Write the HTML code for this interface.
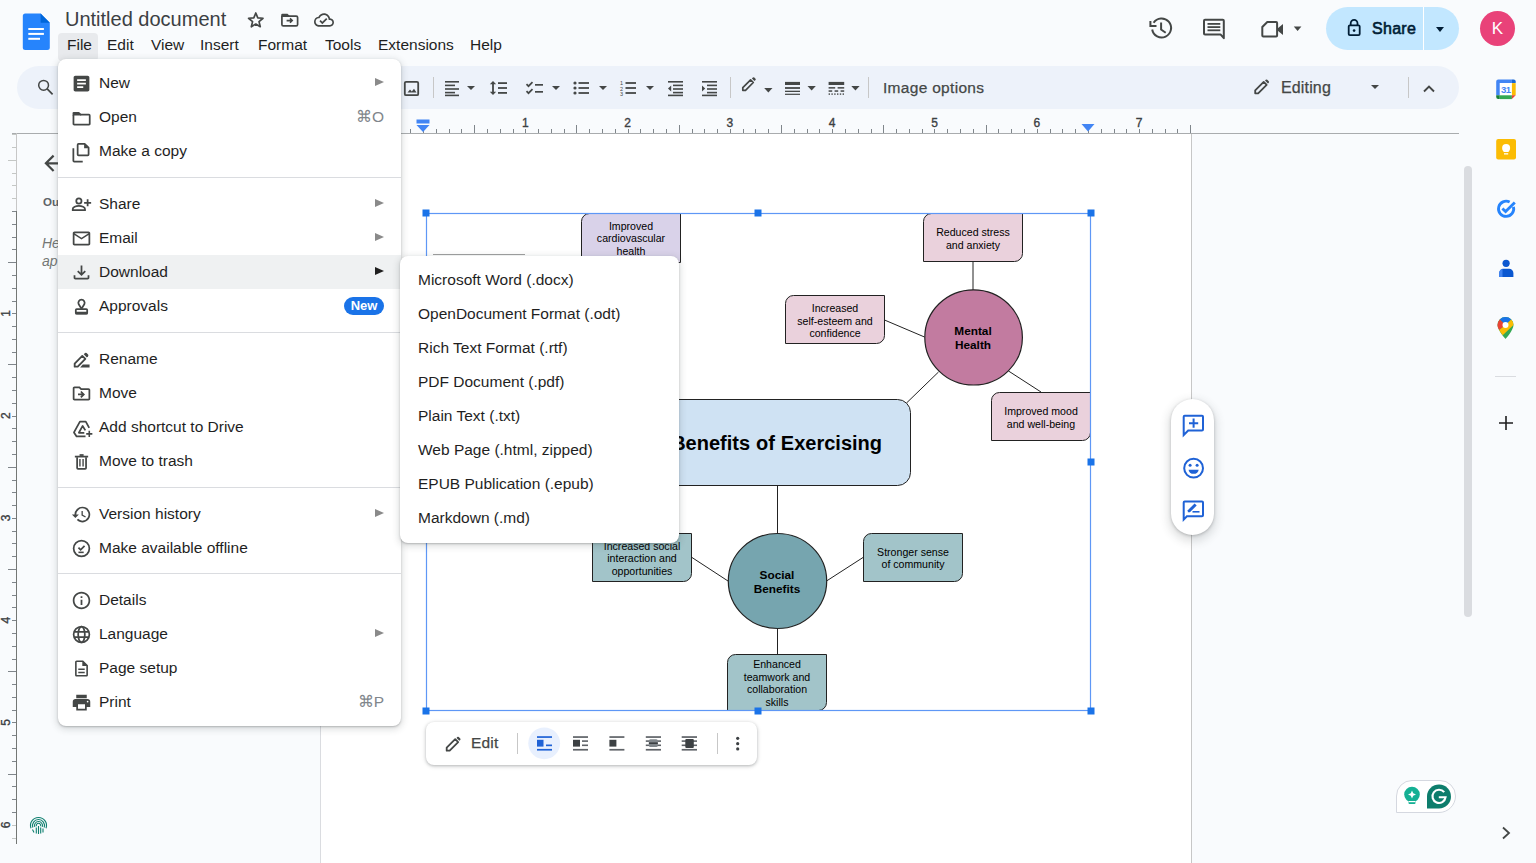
<!DOCTYPE html>
<html><head><meta charset="utf-8">
<style>
*{box-sizing:border-box;margin:0;padding:0}
html,body{width:1536px;height:863px;overflow:hidden;background:#f9fbfd;font-family:"Liberation Sans",sans-serif;color:#1f1f1f;position:relative}
.abs{position:absolute}
svg{position:absolute;overflow:visible}
#title{left:65px;top:8px;font-size:20px;color:#3c4043;white-space:nowrap;line-height:22px}
.mb{position:absolute;top:36px;font-size:15.5px;color:#1f1f1f;white-space:nowrap;line-height:18px}
#toolbar{left:17px;top:66px;width:1442px;height:43px;border-radius:22px;background:#edf2fa}
#page{left:320px;top:134px;width:872px;height:729px;background:#fff;border-left:1px solid #dadce0;border-right:1.5px solid #c7c7c7}
.menu{position:absolute;background:#fff;border-radius:8px;box-shadow:0 2px 6px 2px rgba(60,64,67,.15),0 1px 2px rgba(60,64,67,.3)}
.mi{position:absolute;left:0;right:0;height:34px}
.mi .t{position:absolute;left:41px;top:9px;font-size:15.5px;color:#1f1f1f;white-space:nowrap;line-height:18px}
.mi .k{position:absolute;right:17px;top:9px;font-size:15.5px;color:#80868b;white-space:nowrap;line-height:18px}
.mi .ar{position:absolute;right:17px;top:13px;width:0;height:0;border-left:9px solid #8a8a8a;border-top:4.5px solid transparent;border-bottom:4.5px solid transparent}
.mi svg{left:12.5px;top:7.8px;width:21px;height:21px}
.sep{position:absolute;left:0;right:0;height:1px;background:#dadce0}
.sm .t{left:18px}
.ic{fill:#444746}
.st{fill:none;stroke:#444746}
.dd{position:absolute;width:0;height:0;border-top:5px solid #444746;border-left:5px solid transparent;border-right:5px solid transparent}
.vs{position:absolute;width:1px;background:#c7c7c7}
.dg{font-family:"Liberation Sans",sans-serif;font-size:10.6px;fill:#000;text-anchor:middle}
.dgb{font-family:"Liberation Sans",sans-serif;font-size:11.8px;font-weight:bold;fill:#000;text-anchor:middle}
</style></head><body>

<!-- ===== HEADER ===== -->
<svg style="left:0;top:0" width="60" height="60" viewBox="0 0 60 60">
<path d="M25.3 13.6H40.6L49.8 22.7V47.5a2.5 2.5 0 0 1-2.5 2.5H25.3a2.5 2.5 0 0 1-2.5-2.5V16.1a2.5 2.5 0 0 1 2.5-2.5z" fill="#2684fc"/>
<path d="M40.6 13.6L49.8 22.7H40.6z" fill="#0066da"/>
<rect x="28.3" y="28" width="15.6" height="2" fill="#fff"/>
<rect x="28.3" y="32.9" width="15.6" height="2" fill="#fff"/>
<rect x="28.3" y="37.8" width="11.7" height="2" fill="#fff"/>
</svg>
<div id="title" class="abs">Untitled document</div>
<!-- star -->
<svg style="left:0;top:0" width="400" height="40" viewBox="0 0 400 40">
<path d="M255.80,13.00 L257.80,17.85 L263.03,18.25 L259.03,21.65 L260.27,26.75 L255.80,24.00 L251.33,26.75 L252.57,21.65 L248.57,18.25 L253.80,17.85Z" fill="none" stroke="#444746" stroke-width="1.7" stroke-linejoin="round"/>
<path d="M283.5 16.2H296.2a1.4 1.4 0 0 1 1.4 1.4V24.4a1.4 1.4 0 0 1-1.4 1.4H283.3a1.4 1.4 0 0 1-1.4-1.4V16" fill="none" stroke="#444746" stroke-width="1.7"/>
<path d="M281.2 15a1.2 1.2 0 0 1 1.2-1.2H287.5L289.5 15.8V17H281.2z" fill="#444746"/>
<path d="M286.6 20.6H292.2M290 18.4L292.2 20.6 290 22.8" fill="none" stroke="#444746" stroke-width="1.6"/>
</svg>
<!-- cloud done -->
<svg style="left:314px;top:10px" width="20" height="20" viewBox="0 0 24 24"><path class="ic" d="M19.35 10.04C18.670 6.59 15.64 4 12 4 9.11 4 6.6 5.64 5.35 8.04 2.34 8.36 0 10.91 0 14c0 3.31 2.69 6 6 6h13c2.76 0 5-2.24 5-5 0-2.64-2.05-4.78-4.65-4.96zM19 18H6c-2.21 0-4-1.79-4-4 0-2.05 1.53-3.76 3.56-3.97l1.070-.11.5-.95C8.08 7.140 9.94 6 12 6c2.62 0 4.88 1.86 5.39 4.43l.3 1.5 1.53.11c1.56.1 2.78 1.41 2.78 2.96 0 1.65-1.35 3-3 3zm-9-3.82l-2.09-2.09L6.5 13.5 10 17l6.01-6.01-1.41-1.41z"/></svg>

<div class="abs" style="left:58px;top:33px;width:40px;height:28px;border-radius:4px;background:#e8eaed"></div>
<div class="mb" style="left:67px">File</div>
<div class="mb" style="left:107px">Edit</div>
<div class="mb" style="left:151px">View</div>
<div class="mb" style="left:200px">Insert</div>
<div class="mb" style="left:258px">Format</div>
<div class="mb" style="left:325px">Tools</div>
<div class="mb" style="left:378px">Extensions</div>
<div class="mb" style="left:470px">Help</div>

<!-- right header icons -->
<svg style="left:0;top:0" width="1536" height="60" viewBox="0 0 1536 60">
<g fill="none" stroke="#444746" stroke-width="2">
<path d="M1152.2 29.5A9.5 9.5 0 1 0 1153.6 22.8"/>
<path d="M1161.1 22.5V29.6l4.6 3.2"/>
<path d="M1150.4 21V26H1156.5"/>
<path d="M1205 19.7H1222.8a1 1 0 0 1 1 1V38.2L1220.5 34.4H1205a1 1 0 0 1-1-1V20.7a1 1 0 0 1 1-1z" stroke-linejoin="round"/>
<path d="M1262.3 27V35.6a1 1 0 0 0 1 1H1276.1a1 1 0 0 0 1-1V23a1 1 0 0 0-1-1H1267.3z" stroke-linejoin="round"/>
</g>
<g fill="#444746">
<rect x="1207.5" y="23" width="12.8" height="1.8"/><rect x="1207.5" y="26.2" width="12.8" height="1.8"/><rect x="1207.5" y="29.4" width="12.8" height="1.8"/>
<path d="M1277.5 28.5L1283 24V35L1277.5 30.5z"/>
<path d="M1293.8 26.5H1301.4L1297.6 30.9z"/>
</g>
</svg>
<div class="abs" style="left:1326px;top:7px;width:133px;height:43px;border-radius:22px;background:#c2e7ff"></div>
<div class="abs" style="left:1423px;top:7px;width:1px;height:43px;background:#fff"></div>
<svg style="left:0;top:0" width="1536" height="60" viewBox="0 0 1536 60"><path d="M1350.7 25V23.2a3.4 3.4 0 0 1 6.8 0V25" fill="none" stroke="#001d35" stroke-width="1.8"/><rect x="1348.7" y="25.4" width="11" height="9.8" rx="1.2" fill="none" stroke="#001d35" stroke-width="1.8"/><circle cx="1354.1" cy="30.6" r="1.3" fill="#001d35"/></svg>
<div class="abs" style="left:1372px;top:20px;font-size:16px;color:#001d35;line-height:18px;-webkit-text-stroke:0.6px #001d35;letter-spacing:0.3px">Share</div>
<i class="dd" style="left:1436px;top:27px;border-top-color:#001d35;border-width:5px 4.5px 0 4.5px"></i>
<div class="abs" style="left:1480px;top:11px;width:35px;height:35px;border-radius:50%;background:#e94279"></div>
<div class="abs" style="left:1480px;top:19px;width:35px;text-align:center;font-size:17px;color:#fff;line-height:20px">K</div>

<!-- ===== TOOLBAR ===== -->
<div id="toolbar" class="abs"></div>
<svg style="left:0;top:0" width="100" height="120" viewBox="0 0 100 120"><circle cx="43.6" cy="85.3" r="4.9" fill="none" stroke="#444746" stroke-width="1.5"/><path d="M47.2 88.9L52.6 94.3" stroke="#444746" stroke-width="1.7"/></svg>

<!-- image icon -->
<svg style="left:402px;top:77px" width="19" height="21" viewBox="0 0 19 21"><rect x="2.8" y="4.8" width="13.4" height="13.4" rx="1.3" fill="none" stroke="#444746" stroke-width="1.8"/><path d="M5.5 15.5l2.5-3 1.8 2 2.2-2.8 2.5 3.8z" fill="#444746"/></svg>
<div class="vs" style="left:433px;top:77px;height:21px"></div>
<!-- align left -->
<svg style="left:444px;top:80px" width="16" height="17" viewBox="0 0 16 17"><g fill="#444746"><rect x="1" y="1" width="14" height="1.6"/><rect x="1" y="4.6" width="10" height="1.6"/><rect x="1" y="8.2" width="14" height="1.6"/><rect x="1" y="11.8" width="10" height="1.6"/><rect x="1" y="14.6" width="14" height="1.6"/></g></svg>
<i class="dd" style="left:467px;top:86px;border-width:4.5px 4.5px 0 4.5px"></i>
<!-- line spacing -->
<svg style="left:489px;top:80px" width="19" height="16" viewBox="0 0 19 16"><g fill="#444746"><path d="M4 1l3.2 3.2H4.9v7.6h2.3L4 15 .8 11.8h2.3V4.2H.8z"/><rect x="9" y="2.2" width="9" height="1.8"/><rect x="9" y="7.1" width="9" height="1.8"/><rect x="9" y="12" width="9" height="1.8"/></g></svg>
<!-- checklist -->
<svg style="left:525px;top:81px" width="19" height="14" viewBox="0 0 19 14"><g fill="none" stroke="#444746" stroke-width="1.7"><path d="M1.5 3.2l2 2L7.5 1.2"/><path d="M1.5 10.2l2 2 4-4"/></g><g fill="#444746"><rect x="10" y="3" width="8" height="1.7"/><rect x="10" y="10" width="8" height="1.7"/></g></svg>
<i class="dd" style="left:552px;top:86px;border-width:4.5px 4.5px 0 4.5px"></i>
<!-- bullets -->
<svg style="left:573px;top:81px" width="17" height="14" viewBox="0 0 17 14"><g fill="#444746"><circle cx="2" cy="2" r="1.6"/><circle cx="2" cy="7" r="1.6"/><circle cx="2" cy="12" r="1.6"/><rect x="5.5" y="1.1" width="10.5" height="1.8"/><rect x="5.5" y="6.1" width="10.5" height="1.8"/><rect x="5.5" y="11.1" width="10.5" height="1.8"/></g></svg>
<i class="dd" style="left:599px;top:86px;border-width:4.5px 4.5px 0 4.5px"></i>
<!-- numbered -->
<svg style="left:620px;top:80px" width="17" height="17" viewBox="0 0 17 17"><g fill="#444746"><text x="0" y="5" font-size="5.5" font-family="Liberation Sans">1</text><text x="0" y="10.5" font-size="5.5" font-family="Liberation Sans">2</text><text x="0" y="16" font-size="5.5" font-family="Liberation Sans">3</text><rect x="5.5" y="2.1" width="10.5" height="1.8"/><rect x="5.5" y="7.1" width="10.5" height="1.8"/><rect x="5.5" y="12.1" width="10.5" height="1.8"/></g></svg>
<i class="dd" style="left:646px;top:86px;border-width:4.5px 4.5px 0 4.5px"></i>
<!-- indent decrease -->
<svg style="left:667px;top:80px" width="17" height="17" viewBox="0 0 17 17"><g fill="#444746"><rect x="1" y="1" width="15" height="1.6"/><rect x="6" y="4.6" width="10" height="1.6"/><rect x="6" y="8.2" width="10" height="1.6"/><rect x="6" y="11.8" width="10" height="1.6"/><rect x="1" y="14.6" width="15" height="1.6"/><path d="M4.2 5.5v6l-3.2-3z"/></g></svg>
<!-- indent increase -->
<svg style="left:701px;top:80px" width="17" height="17" viewBox="0 0 17 17"><g fill="#444746"><rect x="1" y="1" width="15" height="1.6"/><rect x="6" y="4.6" width="10" height="1.6"/><rect x="6" y="8.2" width="10" height="1.6"/><rect x="6" y="11.8" width="10" height="1.6"/><rect x="1" y="14.6" width="15" height="1.6"/><path d="M1 5.5v6l3.2-3z"/></g></svg>
<div class="vs" style="left:730px;top:77px;height:21px"></div>
<!-- border color pencil -->
<svg style="left:0;top:0" width="1536" height="110" viewBox="0 0 1536 110">
<path d="M742.8 90.3V87.6L750.6 79.8 753.3 82.5 745.5 90.3Z" fill="none" stroke="#444746" stroke-width="1.7" stroke-linejoin="round"/>
<path d="M751.9 78.5L752.9 77.5a1 1 0 0 1 1.4 0l1.2 1.2a1 1 0 0 1 0 1.4L754.5 81.1Z" fill="#444746"/>
<path d="M764.2 88H772.5L768.35 92.6Z" fill="#444746"/>
<g fill="#444746">
<rect x="785" y="81.9" width="15" height="3.1"/><rect x="785" y="87.1" width="15" height="1.8"/><rect x="785" y="90.7" width="15" height="1.3"/><rect x="785" y="93.7" width="15" height="1.2"/>
<path d="M807.5 86H815.8L811.65 90.4Z"/>
<rect x="828.6" y="81.9" width="15.6" height="3.1"/>
<rect x="828.6" y="87.1" width="6.6" height="1.5"/><rect x="837.6" y="87.1" width="6.6" height="1.5"/>
<rect x="828.6" y="90.3" width="3.6" height="1.5"/><rect x="834.6" y="90.3" width="3.6" height="1.5"/><rect x="840.6" y="90.3" width="3.6" height="1.5"/>
<rect x="828.6" y="93.4" width="1.4" height="1.4"/><rect x="831.4" y="93.4" width="1.4" height="1.4"/><rect x="834.2" y="93.4" width="1.4" height="1.4"/><rect x="837" y="93.4" width="1.4" height="1.4"/><rect x="839.8" y="93.4" width="1.4" height="1.4"/><rect x="842.6" y="93.4" width="1.4" height="1.4"/>
<path d="M851.3 86H859.6L855.45 90.4Z"/>
</g>
</svg>
<div class="vs" style="left:868px;top:77px;height:21px"></div>
<div class="abs" style="left:883px;top:79px;font-size:15.5px;color:#444746;line-height:18px;white-space:nowrap;letter-spacing:0.3px;-webkit-text-stroke:0.25px #444746">Image options</div>

<!-- editing -->
<svg style="left:0;top:0" width="1536" height="863" viewBox="0 0 1536 863"><path d="M1255.19 93.36V90.39L1263.70 81.88L1266.67 84.85L1258.16 93.36Z" fill="none" stroke="#444746" stroke-width="1.8" stroke-linejoin="round"/><path d="M1264.99 80.59L1265.78 79.80a1.09 1.09 0 0 1 1.48 0L1268.75 81.28a1.09 1.09 0 0 1 0 1.48L1267.96 83.56Z" fill="#444746"/></svg>
<div class="abs" style="left:1281px;top:79px;font-size:16px;color:#444746;line-height:18px;letter-spacing:0.15px;-webkit-text-stroke:0.25px #444746">Editing</div>
<i class="dd" style="left:1371px;top:85px;border-width:4.5px 4.5px 0 4.5px"></i>
<div class="vs" style="left:1408px;top:77px;height:21px"></div>
<svg style="left:1421px;top:81px" width="16" height="14" viewBox="0 0 16 14"><path d="M3 10.5l5-5 5 5" fill="none" stroke="#444746" stroke-width="1.9"/></svg>

<!-- ===== PAGE ===== -->
<div id="page" class="abs"></div>
<div class="abs" style="left:12px;top:133px;width:1447px;height:1px;background:#a9acae"></div>
<svg style="left:0;top:0" width="1536" height="140"><g stroke="#80868b" stroke-width="1"><line x1="410.5" y1="129" x2="410.5" y2="133"/><line x1="423.5" y1="129" x2="423.5" y2="133"/><line x1="436.5" y1="129" x2="436.5" y2="133"/><line x1="449.5" y1="129" x2="449.5" y2="133"/><line x1="461.5" y1="129" x2="461.5" y2="133"/><line x1="474.5" y1="125" x2="474.5" y2="133"/><line x1="487.5" y1="129" x2="487.5" y2="133"/><line x1="500.5" y1="129" x2="500.5" y2="133"/><line x1="513.5" y1="129" x2="513.5" y2="133"/><line x1="525.5" y1="129" x2="525.5" y2="133"/><line x1="538.5" y1="129" x2="538.5" y2="133"/><line x1="551.5" y1="129" x2="551.5" y2="133"/><line x1="564.5" y1="129" x2="564.5" y2="133"/><line x1="576.5" y1="125" x2="576.5" y2="133"/><line x1="589.5" y1="129" x2="589.5" y2="133"/><line x1="602.5" y1="129" x2="602.5" y2="133"/><line x1="615.5" y1="129" x2="615.5" y2="133"/><line x1="628.5" y1="129" x2="628.5" y2="133"/><line x1="640.5" y1="129" x2="640.5" y2="133"/><line x1="653.5" y1="129" x2="653.5" y2="133"/><line x1="666.5" y1="129" x2="666.5" y2="133"/><line x1="679.5" y1="125" x2="679.5" y2="133"/><line x1="692.5" y1="129" x2="692.5" y2="133"/><line x1="704.5" y1="129" x2="704.5" y2="133"/><line x1="717.5" y1="129" x2="717.5" y2="133"/><line x1="730.5" y1="129" x2="730.5" y2="133"/><line x1="743.5" y1="129" x2="743.5" y2="133"/><line x1="755.5" y1="129" x2="755.5" y2="133"/><line x1="768.5" y1="129" x2="768.5" y2="133"/><line x1="781.5" y1="125" x2="781.5" y2="133"/><line x1="794.5" y1="129" x2="794.5" y2="133"/><line x1="807.5" y1="129" x2="807.5" y2="133"/><line x1="819.5" y1="129" x2="819.5" y2="133"/><line x1="832.5" y1="129" x2="832.5" y2="133"/><line x1="845.5" y1="129" x2="845.5" y2="133"/><line x1="858.5" y1="129" x2="858.5" y2="133"/><line x1="871.5" y1="129" x2="871.5" y2="133"/><line x1="883.5" y1="125" x2="883.5" y2="133"/><line x1="896.5" y1="129" x2="896.5" y2="133"/><line x1="909.5" y1="129" x2="909.5" y2="133"/><line x1="922.5" y1="129" x2="922.5" y2="133"/><line x1="934.5" y1="129" x2="934.5" y2="133"/><line x1="947.5" y1="129" x2="947.5" y2="133"/><line x1="960.5" y1="129" x2="960.5" y2="133"/><line x1="973.5" y1="129" x2="973.5" y2="133"/><line x1="986.5" y1="125" x2="986.5" y2="133"/><line x1="998.5" y1="129" x2="998.5" y2="133"/><line x1="1011.5" y1="129" x2="1011.5" y2="133"/><line x1="1024.5" y1="129" x2="1024.5" y2="133"/><line x1="1037.5" y1="129" x2="1037.5" y2="133"/><line x1="1050.5" y1="129" x2="1050.5" y2="133"/><line x1="1062.5" y1="129" x2="1062.5" y2="133"/><line x1="1075.5" y1="129" x2="1075.5" y2="133"/><line x1="1088.5" y1="125" x2="1088.5" y2="133"/><line x1="1101.5" y1="129" x2="1101.5" y2="133"/><line x1="1114.5" y1="129" x2="1114.5" y2="133"/><line x1="1126.5" y1="129" x2="1126.5" y2="133"/><line x1="1139.5" y1="129" x2="1139.5" y2="133"/><line x1="1152.5" y1="129" x2="1152.5" y2="133"/><line x1="1165.5" y1="129" x2="1165.5" y2="133"/><line x1="1177.5" y1="129" x2="1177.5" y2="133"/><line x1="1190.5" y1="125" x2="1190.5" y2="133"/></g><g font-family="Liberation Sans" font-size="12" fill="#3c4043" stroke="#3c4043" stroke-width="0.35"><text x="525.3" y="127" text-anchor="middle">1</text><text x="627.6" y="127" text-anchor="middle">2</text><text x="729.9" y="127" text-anchor="middle">3</text><text x="832.2" y="127" text-anchor="middle">4</text><text x="934.5" y="127" text-anchor="middle">5</text><text x="1036.8" y="127" text-anchor="middle">6</text><text x="1139.1" y="127" text-anchor="middle">7</text></g></svg>
<div class="abs" style="left:16px;top:133px;width:1px;height:78px;background:#c7c7c7"></div>
<div class="abs" style="left:16px;top:211px;width:1px;height:633px;background:#747775"></div>
<svg style="left:0;top:0" width="60" height="863"><g stroke="#80868b" stroke-width="1"><line x1="12" y1="134.5" x2="16" y2="134.5" stroke="#c4c7c5"/><line x1="12" y1="147.5" x2="16" y2="147.5" stroke="#c4c7c5"/><line x1="8" y1="160.5" x2="16" y2="160.5" stroke="#c4c7c5"/><line x1="12" y1="173.5" x2="16" y2="173.5" stroke="#c4c7c5"/><line x1="12" y1="185.5" x2="16" y2="185.5" stroke="#c4c7c5"/><line x1="12" y1="198.5" x2="16" y2="198.5" stroke="#c4c7c5"/><line x1="12" y1="211.5" x2="16" y2="211.5"/><line x1="12" y1="224.5" x2="16" y2="224.5"/><line x1="12" y1="237.5" x2="16" y2="237.5"/><line x1="12" y1="249.5" x2="16" y2="249.5"/><line x1="8" y1="262.5" x2="16" y2="262.5"/><line x1="12" y1="275.5" x2="16" y2="275.5"/><line x1="12" y1="288.5" x2="16" y2="288.5"/><line x1="12" y1="301.5" x2="16" y2="301.5"/><line x1="12" y1="313.5" x2="16" y2="313.5"/><line x1="12" y1="326.5" x2="16" y2="326.5"/><line x1="12" y1="339.5" x2="16" y2="339.5"/><line x1="12" y1="352.5" x2="16" y2="352.5"/><line x1="8" y1="364.5" x2="16" y2="364.5"/><line x1="12" y1="377.5" x2="16" y2="377.5"/><line x1="12" y1="390.5" x2="16" y2="390.5"/><line x1="12" y1="403.5" x2="16" y2="403.5"/><line x1="12" y1="416.5" x2="16" y2="416.5"/><line x1="12" y1="428.5" x2="16" y2="428.5"/><line x1="12" y1="441.5" x2="16" y2="441.5"/><line x1="12" y1="454.5" x2="16" y2="454.5"/><line x1="8" y1="467.5" x2="16" y2="467.5"/><line x1="12" y1="480.5" x2="16" y2="480.5"/><line x1="12" y1="492.5" x2="16" y2="492.5"/><line x1="12" y1="505.5" x2="16" y2="505.5"/><line x1="12" y1="518.5" x2="16" y2="518.5"/><line x1="12" y1="531.5" x2="16" y2="531.5"/><line x1="12" y1="543.5" x2="16" y2="543.5"/><line x1="12" y1="556.5" x2="16" y2="556.5"/><line x1="8" y1="569.5" x2="16" y2="569.5"/><line x1="12" y1="582.5" x2="16" y2="582.5"/><line x1="12" y1="595.5" x2="16" y2="595.5"/><line x1="12" y1="607.5" x2="16" y2="607.5"/><line x1="12" y1="620.5" x2="16" y2="620.5"/><line x1="12" y1="633.5" x2="16" y2="633.5"/><line x1="12" y1="646.5" x2="16" y2="646.5"/><line x1="12" y1="659.5" x2="16" y2="659.5"/><line x1="8" y1="671.5" x2="16" y2="671.5"/><line x1="12" y1="684.5" x2="16" y2="684.5"/><line x1="12" y1="697.5" x2="16" y2="697.5"/><line x1="12" y1="710.5" x2="16" y2="710.5"/><line x1="12" y1="722.5" x2="16" y2="722.5"/><line x1="12" y1="735.5" x2="16" y2="735.5"/><line x1="12" y1="748.5" x2="16" y2="748.5"/><line x1="12" y1="761.5" x2="16" y2="761.5"/><line x1="8" y1="774.5" x2="16" y2="774.5"/><line x1="12" y1="786.5" x2="16" y2="786.5"/><line x1="12" y1="799.5" x2="16" y2="799.5"/><line x1="12" y1="812.5" x2="16" y2="812.5"/><line x1="12" y1="825.5" x2="16" y2="825.5" stroke="#c4c7c5"/><line x1="12" y1="838.5" x2="16" y2="838.5" stroke="#c4c7c5"/></g><g font-family="Liberation Sans" font-size="12" fill="#3c4043" stroke="#3c4043" stroke-width="0.35"><text transform="translate(10,313.3) rotate(-90)" x="0" y="0" text-anchor="middle">1</text><text transform="translate(10,415.6) rotate(-90)" x="0" y="0" text-anchor="middle">2</text><text transform="translate(10,517.9) rotate(-90)" x="0" y="0" text-anchor="middle">3</text><text transform="translate(10,620.2) rotate(-90)" x="0" y="0" text-anchor="middle">4</text><text transform="translate(10,722.5) rotate(-90)" x="0" y="0" text-anchor="middle">5</text><text transform="translate(10,824.8) rotate(-90)" x="0" y="0" text-anchor="middle">6</text></g></svg>
<!-- indent markers -->
<svg style="left:415px;top:119px" width="16" height="16" viewBox="0 0 16 16"><rect x="1.5" y="0.5" width="13" height="4" fill="#4285f4"/><path d="M1.5 6h13L8 13z" fill="#4285f4"/></svg>
<svg style="left:1080px;top:119px" width="16" height="16" viewBox="0 0 16 16"><path d="M1.5 5h13L8 12.5z" fill="#4285f4"/></svg>

<!--DIAGRAM-->
<svg style="left:0;top:0" width="1536" height="863" viewBox="0 0 1536 863">
<g stroke="#222" stroke-width="1" fill="none">
<line x1="973" y1="262" x2="973" y2="290"/>
<line x1="884.5" y1="320" x2="924.5" y2="337"/>
<line x1="938.5" y1="372" x2="906.5" y2="403"/>
<line x1="1008.5" y1="371" x2="1041" y2="392"/>
<line x1="777.5" y1="485" x2="777.5" y2="533"/>
<line x1="692" y1="557.5" x2="728" y2="581"/>
<line x1="826.5" y1="581" x2="863" y2="557.5"/>
<line x1="777.5" y1="629" x2="777.5" y2="654"/>
</g>
<g stroke="#222" stroke-width="1">
<path d="M433 254.5H525" stroke="#a0a0a0"/>
<path d="M589.5 213.5H680.5V262.5H581.5V221.5A8 8 0 0 1 589.5 213.5Z" fill="#d9d2e9"/>
<path d="M931.5 213.5H1022.5V253.5A8 8 0 0 1 1014.5 261.5H923.5V221.5A8 8 0 0 1 931.5 213.5Z" fill="#ead1dc"/>
<path d="M793.5 295.5H884.5V335.5A8 8 0 0 1 876.5 343.5H785.5V303.5A8 8 0 0 1 793.5 295.5Z" fill="#ead1dc"/>
<path d="M999.5 392.5H1090.5V432.5A8 8 0 0 1 1082.5 440.5H991.5V400.5A8 8 0 0 1 999.5 392.5Z" fill="#ead1dc"/>
<ellipse cx="973.6" cy="337.4" rx="48.8" ry="47.6" fill="#c27ba0" stroke-width="1.2"/>
<rect x="560.5" y="399.5" width="350" height="86" rx="13" fill="#cfe2f3"/>
<path d="M592.5 533.5H691.5V573.5A8 8 0 0 1 683.5 581.5H592.5Z" fill="#a2c4c9"/>
<path d="M871.5 533.5H962.5V573.5A8 8 0 0 1 954.5 581.5H863.5V541.5A8 8 0 0 1 871.5 533.5Z" fill="#a2c4c9"/>
<ellipse cx="777.5" cy="581" rx="49.2" ry="47.5" fill="#76a5af" stroke-width="1.2"/>
<path d="M735.5 654.5H826.5V702.5A8 8 0 0 1 818.5 710.5H727.5V662.5A8 8 0 0 1 735.5 654.5Z" fill="#a2c4c9"/>
</g>
<g class="dg">
<text x="631" y="229.5">Improved</text><text x="631" y="242">cardiovascular</text><text x="631" y="254.5">health</text>
<text x="973" y="236">Reduced stress</text><text x="973" y="248.5">and anxiety</text>
<text x="835" y="312">Increased</text><text x="835" y="324.5">self-esteem and</text><text x="835" y="337">confidence</text>
<text x="1041" y="415">Improved mood</text><text x="1041" y="427.5">and well-being</text>
<text x="642" y="549.5">Increased social</text><text x="642" y="562">interaction and</text><text x="642" y="574.5">opportunities</text>
<text x="913" y="555.5">Stronger sense</text><text x="913" y="568">of community</text>
<text x="777" y="668">Enhanced</text><text x="777" y="680.5">teamwork and</text><text x="777" y="693">collaboration</text><text x="777" y="705.5">skills</text>
</g>
<g class="dgb">
<text x="973" y="335">Mental</text><text x="973" y="349">Health</text>
<text x="777" y="579">Social</text><text x="777" y="593">Benefits</text>
</g>
<text x="882" y="450" text-anchor="end" font-family="Liberation Sans" font-weight="bold" font-size="20" word-spacing="0.4" fill="#000">Benefits of Exercising</text>
<!-- selection frame -->
<rect x="426.5" y="213.5" width="664" height="497" fill="none" stroke="#5e97f6" stroke-width="1.2"/>
<g fill="#1a73e8">
<rect x="422.5" y="209.5" width="7" height="7"/><rect x="754.5" y="209.5" width="7" height="7"/><rect x="1087.5" y="209.5" width="7" height="7"/>
<rect x="1087.5" y="458.5" width="7" height="7"/>
<rect x="422.5" y="707.5" width="7" height="7"/><rect x="754.5" y="707.5" width="7" height="7"/><rect x="1087.5" y="707.5" width="7" height="7"/>
</g>
</svg>
<!-- floating image toolbar -->
<div class="abs" style="left:426px;top:722px;width:331px;height:43px;border-radius:8px;background:#fff;box-shadow:0 1px 3px rgba(60,64,67,.3),0 1px 4px 1px rgba(60,64,67,.1)"></div>
<svg style="left:0;top:0" width="1536" height="863" viewBox="0 0 1536 863"><path d="M446.69 750.66V747.69L455.20 739.18L458.17 742.15L449.66 750.66Z" fill="none" stroke="#444746" stroke-width="1.8" stroke-linejoin="round"/><path d="M456.49 737.89L457.28 737.10a1.09 1.09 0 0 1 1.48 0L460.25 738.58a1.09 1.09 0 0 1 0 1.48L459.46 740.86Z" fill="#444746"/></svg>
<div class="abs" style="left:471px;top:734px;font-size:15.5px;color:#444746;line-height:18px;letter-spacing:0.2px;-webkit-text-stroke:0.25px #444746">Edit</div>
<div class="vs" style="left:517px;top:733px;height:21px"></div>
<svg style="left:0;top:0" width="1536" height="863" viewBox="0 0 1536 863">
<circle cx="544.2" cy="743.3" r="15.9" fill="#e8f0fe"/>
<g fill="#1f62d6"><rect x="537" y="736.2" width="15" height="1.7"/><rect x="537" y="748.9" width="15" height="1.7"/><rect x="537" y="739.8" width="6.5" height="6.8"/><rect x="546" y="744.5" width="6" height="1.7"/></g>
<g fill="#5f6368">
<rect x="573" y="736.2" width="15" height="1.7"/><rect x="573" y="748.9" width="15" height="1.7"/><rect x="582" y="740.3" width="6" height="1.6"/><rect x="582" y="744.5" width="6" height="1.6"/>
<rect x="609.4" y="736.2" width="15" height="1.7"/><rect x="609.4" y="748.9" width="15" height="1.7"/>
<rect x="645.8" y="736.2" width="15.2" height="1.7"/><rect x="645.8" y="740.3" width="15.2" height="1.6"/><rect x="645.8" y="744.5" width="15.2" height="1.6"/><rect x="645.8" y="748.9" width="15.2" height="1.7"/>
<rect x="681.7" y="736.2" width="15.3" height="1.7"/><rect x="681.7" y="740.3" width="15.3" height="1.6"/><rect x="681.7" y="744.5" width="15.3" height="1.6"/><rect x="681.7" y="748.9" width="15.3" height="1.7"/>
</g>
<g fill="#3c4043">
<rect x="573" y="739.8" width="7" height="6.8"/>
<rect x="609.4" y="739.8" width="7" height="6.8"/>
<rect x="648.9" y="739.3" width="8.9" height="7.8" rx="1.5" fill="#80868b"/><rect x="648.9" y="742.4" width="8.9" height="1.6"/>
<rect x="685.3" y="739" width="8.5" height="9.1" rx="1"/>
<circle cx="737.7" cy="738.3" r="1.6"/><circle cx="737.7" cy="743.7" r="1.6"/><circle cx="737.7" cy="748.9" r="1.6"/>
</g>
</svg>
<div class="vs" style="left:717px;top:733px;height:21px"></div>


<!--/DIAGRAM-->
<!--SIDE-->
<!-- right floating comment pill -->
<div class="abs" style="left:1171px;top:399px;width:43px;height:136px;border-radius:22px;background:#fff;box-shadow:0 1px 3px rgba(60,64,67,.3),0 4px 8px 3px rgba(60,64,67,.15)"></div>
<svg style="left:0;top:0" width="1536" height="863" viewBox="0 0 1536 863">
<g fill="none" stroke="#1f62d6" stroke-width="2">
<path d="M1183.7 435V416.8a1 1 0 0 1 1-1H1202a1 1 0 0 1 1 1V429.5a1 1 0 0 1-1 1H1188.2z" stroke-linejoin="miter"/>
<circle cx="1193.6" cy="468.2" r="9.4"/>
<path d="M1183.7 519.6V502.6a1 1 0 0 1 1-1H1202a1 1 0 0 1 1 1V515.3a1 1 0 0 1-1 1H1186.9z" stroke-linejoin="miter"/>
</g>
<g fill="#1f62d6">
<path d="M1192.6 418.6h2v3.6h3.6v2h-3.6v3.6h-2v-3.6h-3.6v-2h3.6z"/>
<circle cx="1190.1" cy="465.3" r="1.5"/><circle cx="1197.1" cy="465.3" r="1.5"/>
<path d="M1188.6 469.8H1198.6A5 4 0 0 1 1188.6 469.8z"/>
<path d="M1187.8 512.3V510.2L1194.6 503.4 1196.7 505.5 1189.9 512.3z"/>
<path d="M1192.5 511h7v1.6h-7z"/>
</g>
</svg>
<!-- scrollbar -->
<div class="abs" style="left:1464px;top:166px;width:8px;height:451px;border-radius:4px;background:#dadce0"></div>

<!-- right sidebar -->
<svg style="left:0;top:0" width="1536" height="200" viewBox="0 0 1536 200">
<rect x="1499.7" y="83.1" width="12.2" height="12.2" fill="#fff"/>
<path d="M1498.2 79.6H1511.9V83.1H1499.7V95.3H1496.2V81.6a2 2 0 0 1 2-2z" fill="#4285f4"/>
<path d="M1511.9 79.6H1513.7a2 2 0 0 1 2 2V83.1H1511.9z" fill="#1967d2"/>
<path d="M1511.9 83.1H1515.7V95.3H1511.9z" fill="#fbbc04"/>
<path d="M1499.7 95.3H1511.9V99.1H1499.7z" fill="#34a853"/>
<path d="M1496.2 95.3H1499.7V99.1H1498.2a2 2 0 0 1-2-2z" fill="#188038"/>
<path d="M1511.9 95.3H1515.7L1511.9 99.1z" fill="#ea4335"/>
<text x="1505.8" y="93.2" text-anchor="middle" font-family="Liberation Sans" font-size="9.5" font-weight="bold" fill="#4285f4" letter-spacing="-0.4">31</text>
</svg>

<svg style="left:0;top:0" width="1536" height="200" viewBox="0 0 1536 200"><rect x="1496.2" y="139" width="19.8" height="20.6" rx="2" fill="#fbbc04"/><circle cx="1506.1" cy="148" r="4" fill="#fff"/><path d="M1503.6 150.5h5v1.5h-5z" fill="#fff"/><rect x="1504" y="153.2" width="4.2" height="1.3" fill="#fff"/></svg>
<svg style="left:0;top:0" width="1536" height="300" viewBox="0 0 1536 300"><path d="M1513.44 206.83A7.6 7.6 0 1 1 1509.67 202.09" fill="none" stroke="#2684fc" stroke-width="2.8"/><path d="M1502.4 208.4L1505.6 211.6 1514.8 202.4" fill="none" stroke="#2684fc" stroke-width="2.8"/></svg>
<svg style="left:0;top:0" width="1536" height="300" viewBox="0 0 1536 300"><circle cx="1506.1" cy="263.3" r="3.6" fill="#0b57d0"/><path d="M1499.1 277V273a4.3 4.3 0 0 1 4.3-4.3H1509.1a4.3 4.3 0 0 1 4.3 4.3V277z" fill="#0b57d0"/><path d="M1499.1 277V273a4.3 4.3 0 0 1 4.3-4.3H1502.5V277z" fill="#4c8df6" opacity=".8"/></svg>
<svg style="left:1497px;top:317px" width="17" height="22" viewBox="0 0 17 22"><path d="M8.5 0A8 8 0 0 0 .5 8c0 5 8 14 8 14s8-9 8-14a8 8 0 0 0-8-8z" fill="#34a853"/><path d="M8.5 0A8 8 0 0 0 2.8 2.4L8.5 8l5.7-5.6A8 8 0 0 0 8.5 0z" fill="#1a73e8"/><path d="M2.8 2.4A8 8 0 0 0 .5 8c0 1.5.7 3.3 1.7 5L8.5 8z" fill="#ea4335"/><path d="M14.2 2.4L8.5 8l-6.3 5c1 1.8 2.3 3.7 3.5 5.2L16.5 8a8 8 0 0 0-2.3-5.6z" fill="#fbbc04"/><circle cx="8.5" cy="8" r="3" fill="#fff"/></svg>
<div class="abs" style="left:1495px;top:376px;width:21px;height:1px;background:#dadce0"></div>
<svg style="left:1498px;top:415px" width="16" height="16" viewBox="0 0 16 16"><path d="M7.2 1h1.6v6.2H15v1.6H8.8V15H7.2V8.8H1V7.2h6.2z" fill="#1f1f1f"/></svg>

<!-- grammarly -->
<svg style="left:1396px;top:780px" width="60" height="33" viewBox="0 0 60 33">
<path d="M0.5 32.5V16A15.5 15.5 0 0 1 16 0.5h28A15.5 15.5 0 0 1 59.5 16A16.5 16.5 0 0 1 43 32.5z" fill="#fff" stroke="#d5d8e0" stroke-width="1"/>
<circle cx="16" cy="14.5" r="7.8" fill="#15b094"/><rect x="12.5" y="20" width="7" height="4" rx="1" fill="#15b094"/><rect x="12.5" y="21" width="7" height="1.2" fill="#fff"/>
<path d="M16 10.5l1.2 2.8 2.8 1.2-2.8 1.2L16 18.5l-1.2-2.8-2.8-1.2 2.8-1.2z" fill="#fff"/>
<path d="M31 28.5V16A12 12 0 1 1 43 28.5z" fill="#0d7d6c"/>
<path d="M48.2 12.2A6.6 6.6 0 1 0 49.6 17.2H42.8" fill="none" stroke="#fff" stroke-width="2.1"/>
</svg>
<svg style="left:1500px;top:826px" width="12" height="14" viewBox="0 0 12 14"><path d="M3 1.5l6 5.5-6 5.5" fill="none" stroke="#444746" stroke-width="1.8"/></svg>

<!-- fingerprint -->
<svg style="left:0;top:0" width="60" height="863" viewBox="0 0 60 863"><g fill="none" stroke="#0f7f6f" stroke-width="1.1"><path d="M30.98 828.24A8 8 0 1 1 46.02 828.24"/><path d="M32.86 827.55A6 6 0 1 1 44.14 827.55"/><path d="M34.74 826.87A4 4 0 1 1 42.26 826.87"/><path d="M36.43 826.25A2.2 2.2 0 1 1 40.57 826.25"/><path d="M32.5 829.5L34 832.5M36.3 827.5V833.5M38.5 826V834M40.7 827.5V833.5M43 828.5V832.5"/></g></svg>

<!--/SIDE-->
<!--MENUS-->
<!-- left outline panel bits -->
<svg style="left:0;top:0" width="60" height="200" viewBox="0 0 60 200"><path d="M46 163.3H62M53.6 155.6L45.9 163.3 53.6 171" fill="none" stroke="#444746" stroke-width="2.2"/></svg>
<div class="abs" style="left:43px;top:196px;font-size:11.5px;font-weight:bold;color:#5f6368;line-height:13px">Ou</div>
<div class="abs" style="left:42px;top:234px;font-size:14px;font-style:italic;color:#747775;line-height:18px">He<br>ap</div>

<!-- File menu -->
<div class="menu" style="left:58px;top:59px;width:343px;height:667px">
 <div class="mi" style="top:6px"><svg width="20" height="20" viewBox="0 0 24 24"><path class="ic" d="M19 3H5c-1.1 0-2 .9-2 2v14c0 1.1.9 2 2 2h14c1.1 0 2-.9 2-2V5c0-1.1-.9-2-2-2zm-5 14H7v-2h7v2zm3-4H7v-2h10v2zm0-4H7V7h10v2z"/></svg><span class="t">New</span><i class="ar"></i></div>
 <div class="mi" style="top:40px"><svg width="20" height="20" viewBox="0 0 24 24"><path class="st" stroke-width="2" d="M2.8 9V19.4a.8.8 0 0 0 .8.8H20.6a.8.8 0 0 0 .8-.8V9.6a.8.8 0 0 0-.8-.8H10.5"/><path class="ic" d="M1.8 6.8a1.2 1.2 0 0 1 1.2-1.2H9.2L11.6 8V9.8H1.8z"/></svg><span class="t">Open</span><span class="k">⌘O</span></div>
 <div class="mi" style="top:74px"><svg width="20" height="20" viewBox="0 0 24 24"><path class="st" stroke-width="2" d="M8.6 3.2H15.6L20.1 7.7V15.4a1 1 0 0 1-1 1H8.6a1 1 0 0 1-1-1V4.2a1 1 0 0 1 1-1z" stroke-linejoin="round"/><path class="ic" d="M15 3L20.3 8.3H15Z"/><path class="st" stroke-width="2" d="M2.7 8.4V22.6a1 1 0 0 0 1 1H13.4"/></svg><span class="t">Make a copy</span></div>
 <div class="sep" style="top:118px"></div>
 <div class="mi" style="top:127px"><svg width="20" height="20" viewBox="0 0 24 24"><circle class="st" stroke-width="2" cx="9" cy="8" r="3"/><path class="st" stroke-width="2" d="M2 18.5v-1.5c0-2 3.5-3.5 7-3.5s7 1.5 7 3.5v1.5z"/><path class="ic" d="M18 6h2v3h3v2h-3v3h-2v-3h-3V9h3z"/></svg><span class="t">Share</span><i class="ar"></i></div>
 <div class="mi" style="top:161px"><svg width="20" height="20" viewBox="0 0 24 24"><path class="ic" d="M22 6c0-1.1-.9-2-2-2H4c-1.1 0-2 .9-2 2v12c0 1.1.9 2 2 2h16c1.1 0 2-.9 2-2V6zm-2 0l-8 5-8-5h16zm0 12H4V8l8 5 8-5v10z"/></svg><span class="t">Email</span><i class="ar"></i></div>
 <div class="abs" style="left:0;right:0;top:196px;height:34px;background:#eff1f2"></div>
 <div class="mi" style="top:195px"><svg width="20" height="20" viewBox="0 0 24 24"><path class="ic" d="M19 15v3H5v-3H3v3c0 1.1.9 2 2 2h14c1.1 0 2-.9 2-2v-3h-2zm-7 1l5-5-1.41-1.41L13 12.17V4h-2v8.17L8.41 9.59 7 11l5 5z"/></svg><span class="t">Download</span><i class="ar" style="border-left-color:#1f1f1f"></i></div>
 <div class="mi" style="top:229px"><svg width="20" height="20" viewBox="0 0 24 24"><path class="st" stroke-width="2" d="M12 14.5l-3.2-5A3.6 3.6 0 1 1 15.2 9.5z" stroke-linejoin="round"/><rect class="st" stroke-width="2" x="5.5" y="15" width="13" height="5" rx="1"/><rect class="ic" x="5" y="18" width="14" height="3"/></svg><span class="t">Approvals</span><div class="abs" style="right:17px;top:9px;width:40px;height:17.5px;border-radius:9px;background:#1a73e8;color:#fff;font-size:13px;font-weight:bold;text-align:center;line-height:18px">New</div></div>
 <div class="sep" style="top:273px"></div>
 <div class="mi" style="top:282px"><svg width="20" height="20" viewBox="0 0 24 24"><path class="st" stroke-width="2.1" d="M4.2 20.2V16.6L12.9 7.9 16.4 11.4 7.7 20.2Z" stroke-linejoin="round"/><path class="ic" d="M14.6 6.1L16 4.7a1.3 1.3 0 0 1 1.8 0l1.7 1.7a1.3 1.3 0 0 1 0 1.8L18.1 9.6Z"/><path class="ic" d="M10.4 21L13.4 17.8H21.2V21Z"/></svg><span class="t">Rename</span></div>
 <div class="mi" style="top:316px"><svg width="20" height="20" viewBox="0 0 24 24"><path class="ic" d="M20 6h-8l-2-2H4c-1.1 0-2 .9-2 2v12c0 1.1.9 2 2 2h16c1.1 0 2-.9 2-2V8c0-1.1-.9-2-2-2zm0 12H4V6h5.17l2 2H20v10zm-7.84-6H8v2h4.16l-1.59 1.59L11.99 17 16 13.01 11.99 9l-1.41 1.41L12.16 12z"/></svg><span class="t">Move</span></div>
 <div class="mi" style="top:350px"><svg width="20" height="20" viewBox="0 0 24 24"><path class="st" stroke-width="2" d="M20.8 12.4L16.9 5.2H10.2L3.4 17.6 6.4 22.2H16.6" stroke-linejoin="round"/><path class="st" stroke-width="2" d="M16.4 15.3L13.3 10.2 9 18H15.2" stroke-linejoin="round"/><path class="ic" d="M20 15.8h1.8v2.6h2.6v1.8h-2.6v2.6H20v-2.6h-2.6v-1.8H20z"/></svg><span class="t">Add shortcut to Drive</span></div>
 <div class="mi" style="top:384px"><svg width="20" height="20" viewBox="0 0 24 24"><path class="ic" d="M4.4 5.4H19.6V7.4H4.4z"/><path class="ic" d="M9.8 3.6H14.4V5.6H9.8z"/><path class="st" stroke-width="2" d="M7 7V19.5a1 1 0 0 0 1 1H16.2a1 1 0 0 0 1-1V7"/><path class="ic" d="M9.4 9H11V17.8H9.4zM13 9H14.6V17.8H13z"/></svg><span class="t">Move to trash</span></div>
 <div class="sep" style="top:428px"></div>
 <div class="mi" style="top:437px"><svg width="20" height="20" viewBox="0 0 24 24"><path class="ic" d="M13 3a9 9 0 0 0-9 9H1l4 4 4-4H6a7 7 0 1 1 2.05 4.95l-1.42 1.42A9 9 0 1 0 13 3zm-1 5v5l4.25 2.52.77-1.28-3.52-2.09V8z"/></svg><span class="t">Version history</span><i class="ar"></i></div>
 <div class="mi" style="top:471px"><svg width="20" height="20" viewBox="0 0 24 24"><circle class="st" stroke-width="2" cx="12" cy="12" r="9"/><path class="st" stroke-width="2" d="M8.5 11l2.5 2.5 4.5-4.5"/><rect class="ic" x="8.5" y="15.5" width="6" height="1.8"/></svg><span class="t">Make available offline</span></div>
 <div class="sep" style="top:514px"></div>
 <div class="mi" style="top:523px"><svg width="20" height="20" viewBox="0 0 24 24"><path class="ic" d="M11 7h2v2h-2zm0 4h2v6h-2zm1-9C6.48 2 2 6.48 2 12s4.48 10 10 10 10-4.48 10-10S17.52 2 12 2zm0 18c-4.41 0-8-3.59-8-8s3.59-8 8-8 8 3.59 8 8-3.59 8-8 8z"/></svg><span class="t">Details</span></div>
 <div class="mi" style="top:557px"><svg width="20" height="20" viewBox="0 0 24 24"><g class="st" stroke-width="2"><circle cx="12" cy="12" r="9"/><ellipse cx="12" cy="12" rx="3.8" ry="9"/><path d="M3.5 9h17M3.5 15h17"/></g></svg><span class="t">Language</span><i class="ar"></i></div>
 <div class="mi" style="top:591px"><svg width="20" height="20" viewBox="0 0 24 24"><path class="ic" d="M8 16h8v2H8zm0-4h8v2H8zm6-10H6c-1.1 0-2 .9-2 2v16c0 1.1.89 2 1.99 2H18c1.1 0 2-.9 2-2V8l-6-6zm4 18H6V4h7v5h5v11z" transform="translate(12 12) scale(.92) translate(-12 -12)"/></svg><span class="t">Page setup</span></div>
 <div class="mi" style="top:625px"><svg width="20" height="20" viewBox="0 0 24 24"><path class="ic" d="M19 8H5c-1.66 0-3 1.34-3 3v6h4v4h12v-4h4v-6c0-1.66-1.34-3-3-3zm-3 11H8v-5h8v5zm3-7c-.55 0-1-.45-1-1s.45-1 1-1 1 .45 1 1-.45 1-1 1zm-1-9H6v4h12V3z"/></svg><span class="t">Print</span><span class="k">⌘P</span></div>
</div>

<!-- Download submenu -->
<div class="menu sm" style="left:400px;top:256px;width:279px;height:287px">
 <div class="mi" style="top:6px"><span class="t">Microsoft Word (.docx)</span></div>
 <div class="mi" style="top:40px"><span class="t">OpenDocument Format (.odt)</span></div>
 <div class="mi" style="top:74px"><span class="t">Rich Text Format (.rtf)</span></div>
 <div class="mi" style="top:108px"><span class="t">PDF Document (.pdf)</span></div>
 <div class="mi" style="top:142px"><span class="t">Plain Text (.txt)</span></div>
 <div class="mi" style="top:176px"><span class="t">Web Page (.html, zipped)</span></div>
 <div class="mi" style="top:210px"><span class="t">EPUB Publication (.epub)</span></div>
 <div class="mi" style="top:244px"><span class="t">Markdown (.md)</span></div>
</div>

<!--/MENUS-->
</body></html>
